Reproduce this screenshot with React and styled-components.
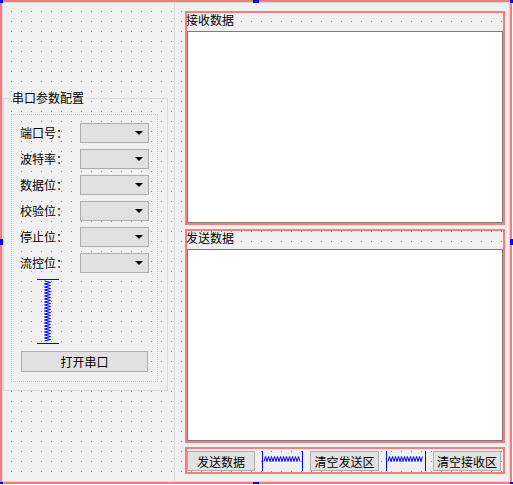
import React from "react";
import styled, { createGlobalStyle } from "styled-components";

const RED = "#f87c7c";
const LINE = "#d9d9d9";

const GlobalStyle = createGlobalStyle`
  html, body {
    margin: 0;
    padding: 0;
    background: #fff;
  }
  body {
    font-family: "Noto Sans CJK SC", "Noto Sans", sans-serif;
    font-size: 12px;
    color: #000;
  }
`;

const Form = styled.div`
  position: relative;
  width: 512px;
  height: 484px;
  box-sizing: border-box;
  border: 2px solid ${RED};
  background: #f0f0f0;
`;

const Canvas = styled.div`
  height: 100%;
  box-sizing: border-box;
  border: 1px solid ${LINE};
  display: flex;
  background-image: linear-gradient(to right, #f0f0f0 9px, transparent 9px),
    linear-gradient(to bottom, #f0f0f0 9px, #8c8c8c 9px);
  background-size: 10px 10px;
  background-position: -1px -1px;
`;

const LeftPane = styled.div`
  flex: none;
  width: 171px;
  border-right: 1px solid ${LINE};
  padding-top: 88px;
`;

const GroupBox = styled.fieldset`
  box-sizing: border-box;
  width: 165px;
  margin: 0;
  padding: 9px 0 8px 7px;
  border: 1px solid ${LINE};
  legend {
    margin-left: 0;
    padding: 0 1px;
    line-height: 14px;
    font-size: 12px;
  }
`;

const DotLayout = styled.div`
  box-sizing: border-box;
  width: 147px;
  height: 268px;
  border: 1px dotted #c4c4c4;
  padding-top: 8px;
  display: flex;
  flex-direction: column;
`;

const Rows = styled.div`
  display: flex;
  flex-direction: column;
  gap: 6px;
`;

const Row = styled.div`
  display: flex;
  align-items: center;
  height: 20px;
  padding-left: 8px;
`;

const Label = styled.span`
  width: 60px;
  line-height: 20px;
`;

const Combo = styled.div`
  box-sizing: border-box;
  width: 69px;
  height: 20px;
  background: #e1e1e1;
  border: 1px solid #adadad;
  display: flex;
  justify-content: flex-end;
  align-items: center;
  padding-right: 5px;
  &::after {
    content: "";
    border-left: 4px solid transparent;
    border-right: 4px solid transparent;
    border-top: 4px solid #000;
  }
`;

const VSpacer = styled.svg`
  display: block;
  margin: 6px 0 0 25px;
`;

const PushButton = styled.button`
  box-sizing: border-box;
  width: ${(p) => p.$w}px;
  height: ${(p) => p.$h || 20}px;
  margin: ${(p) => p.$m || 0};
  padding: 0;
  background: #e1e1e1;
  border: 1px solid #adadad;
  font: inherit;
  font-size: 12px;
  color: #000;
  flex: none;
`;

const RightPane = styled.div`
  flex: 1;
  padding: 8px 6px 0 10px;
  display: flex;
  flex-direction: column;
  gap: 4px;
`;

const LayoutFrame = styled.div`
  box-sizing: border-box;
  height: ${(p) => p.$h}px;
  border: 2px solid ${RED};
  display: flex;
  flex-direction: column;
`;

const FrameTitle = styled.div`
  height: 18px;
  line-height: 14px;
  margin-left: -1px;
`;

const TextEdit = styled.div`
  flex: 1;
  background: #fff;
  border: 1px solid #7a7a7a;
`;

const ButtonRow = styled.div`
  display: flex;
  align-items: center;
  gap: 7px;
  padding: 2px 2px 1px 0;
`;

const HSpacerBox = styled.svg`
  display: block;
  flex: none;
`;

const Handle = styled.div`
  position: absolute;
  width: 6px;
  height: 6px;
  background: #0000ff;
  left: ${(p) => p.$x}px;
  top: ${(p) => p.$y}px;
`;

function VerticalSpring() {
  const pts = [];
  for (let i = 0, y = 2; y < 63; i++, y += 1.5) {
    pts.push(`${i % 2 ? 13.5 : 7.5},${y}`);
  }
  return (
    <VSpacer width="22" height="65" viewBox="0 0 22 65">
      <line x1="0" y1="0.5" x2="22" y2="0.5" stroke="#0000ff" />
      <line x1="0" y1="64.5" x2="22" y2="64.5" stroke="#0000ff" />
      <polyline points={pts.join(" ")} fill="none" stroke="#0000ff" strokeWidth="1" />
    </VSpacer>
  );
}

function HorizontalSpring({ width }) {
  const pts = [];
  for (let i = 0, x = 2; x < width - 2; i++, x += 1.5) {
    pts.push(`${x},${i % 2 ? 5.5 : 10.5}`);
  }
  return (
    <HSpacerBox width={width} height="20" viewBox={`0 0 ${width} 20`}>
      <line x1="0.5" y1="0" x2="0.5" y2="20" stroke="#0000ff" />
      <line x1={width - 0.5} y1="0" x2={width - 0.5} y2="20" stroke="#0000ff" />
      <polyline points={pts.join(" ")} fill="none" stroke="#0000ff" strokeWidth="1" />
    </HSpacerBox>
  );
}

const fields = ["端口号：", "波特率：", "数据位：", "校验位：", "停止位：", "流控位："];

const handles = [
  [-5, -5], [251, -5], [508, -5],
  [-5, 237], [508, 237],
  [-5, 480], [251, 480], [508, 480],
];

export default function App() {
  return (
    <>
      <GlobalStyle />
      <Form>
        <Canvas>
          <LeftPane>
            <GroupBox>
              <legend>串口参数配置</legend>
              <DotLayout>
                <Rows>
                  {fields.map((f) => (
                    <Row key={f}>
                      <Label>{f}</Label>
                      <Combo />
                    </Row>
                  ))}
                </Rows>
                <VerticalSpring />
                <PushButton $w={127} $h={21} $m="7px 0 0 9px">
                  打开串口
                </PushButton>
              </DotLayout>
            </GroupBox>
          </LeftPane>
          <RightPane>
            <LayoutFrame $h={214}>
              <FrameTitle>接收数据</FrameTitle>
              <TextEdit />
            </LayoutFrame>
            <LayoutFrame $h={214}>
              <FrameTitle>发送数据</FrameTitle>
              <TextEdit />
            </LayoutFrame>
            <LayoutFrame $h={27}>
              <ButtonRow>
                <PushButton $w={68}>发送数据</PushButton>
                <HorizontalSpring width={41} />
                <PushButton $w={69}>清空发送区</PushButton>
                <HorizontalSpring width={40} />
                <PushButton $w={68}>清空接收区</PushButton>
              </ButtonRow>
            </LayoutFrame>
          </RightPane>
        </Canvas>
        {handles.map(([x, y]) => (
          <Handle key={`${x}-${y}`} $x={x} $y={y} />
        ))}
      </Form>
    </>
  );
}
